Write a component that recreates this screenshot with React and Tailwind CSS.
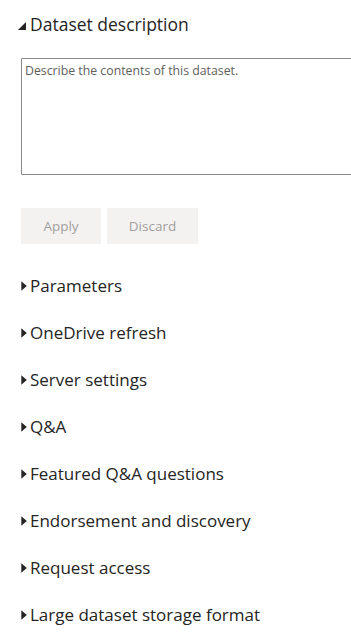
import React from "react";

const items = [
  "Parameters",
  "OneDrive refresh",
  "Server settings",
  "Q&A",
  "Featured Q&A questions",
  "Endorsement and discovery",
  "Request access",
  "Large dataset storage format",
];

function Collapsed() {
  return (
    <svg width="6" height="10" viewBox="0 0 6 10" className="shrink-0 mr-[3px]">
      <path d="M0.3 0.3 L5.8 5 L0.3 9.7 Z" fill="#252423" />
    </svg>
  );
}

function Expanded() {
  return (
    <svg width="8" height="8" viewBox="0 0 8 8" className="shrink-0 mr-[4px] mt-[3px]">
      <path d="M8 0 L8 8 L0 8 Z" fill="#252423" />
    </svg>
  );
}

export default function App() {
  return (
    <div
      className="w-[351px] h-[635px] overflow-hidden bg-white text-[#252423]"
      style={{ fontFamily: '"Open Sans", "Noto Sans", sans-serif' }}
    >
      <div className="pl-[18px] pt-[11px]">
        <div className="flex items-center h-[26px] text-[17.5px]">
          <Expanded />
          <span>Dataset description</span>
        </div>
      </div>
      <div className="pl-[21px] pt-[21px]">
        <div className="w-[340px] h-[117px] border border-[#8a8886] rounded-[1px] px-[3px] pt-[3px] text-[12.3px] text-[#605e5c]">
          Describe the contents of this dataset.
        </div>
      </div>
      <div className="pl-[21px] pt-[33px] flex gap-[6px]">
        <div className="w-[80px] h-[36px] bg-[#f3f2f1] text-[#a19f9d] text-[13.5px] flex items-center justify-center">
          Apply
        </div>
        <div className="w-[91px] h-[36px] bg-[#f3f2f1] text-[#a19f9d] text-[13.5px] flex items-center justify-center">
          Discard
        </div>
      </div>
      <div className="pl-[21px] pt-[18px] flex flex-col">
        {items.map((t) => (
          <div key={t} className="flex items-center h-[47px] text-[17px]">
            <Collapsed />
            <span>{t}</span>
          </div>
        ))}
      </div>
    </div>
  );
}
